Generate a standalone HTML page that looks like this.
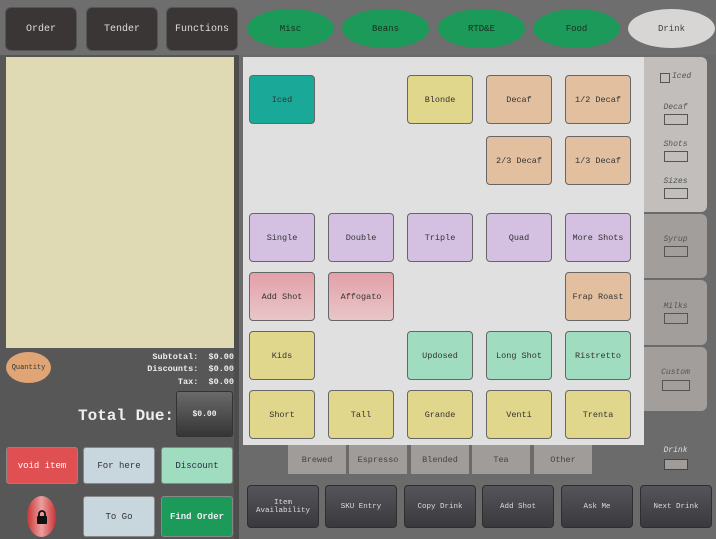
<!DOCTYPE html>
<html><head><meta charset="utf-8"><style>
*{box-sizing:border-box;margin:0;padding:0}
body{width:716px;height:539px;overflow:hidden;background:#6b6b6b;font-family:"Liberation Mono","DejaVu Sans Mono",monospace;position:relative}
div{position:absolute}
.c{display:flex;align-items:center;justify-content:center;text-align:center}
.tb{background:#3a3636;border:1px solid #555;border-radius:6px;color:#ddd;font-size:10px;top:7px;height:44px;width:72px}
.el{border-radius:50%;background:#1c9a5a;font-size:9px;top:9px;height:39px;width:87px;color:#17301f}
.b{width:66px;height:49px;border:1px solid #666;border-radius:4px;font-size:8.5px;color:#333}
.y{background:#e0d68c}.o{background:#e2c09f}.p{background:#d4c0e0}.g{background:#a0dcbf}
.pk{background:linear-gradient(#e3a0a8,#e8c6c9)}
.tab{top:445px;height:29px;width:58px;background:#a09c99;color:#444;font-size:8.5px}
.bb{top:485px;height:43px;width:72px;background:linear-gradient(#55545a,#3a393d);border:1px solid #2e2e2e;border-radius:4px;color:#ddd;font-size:7.5px}
.sl{color:#555;font-size:8px;font-style:italic;left:644px;width:63px;text-align:center}
.bx{width:24px;height:11px;border:1px solid #555;left:664px}
.lb{height:37px;width:72px;border-radius:3px;font-size:9px;border:1px solid #888}
</style></head><body>
<div style="left:0;top:0;width:716px;height:55px;background:#6e6e6e"></div>
<div style="left:0;top:55px;width:238px;height:484px;background:#575757"></div>
<div style="left:234px;top:55px;width:5px;height:484px;background:#4d4d4d"></div>
<div class="tb c" style="left:5px">Order</div>
<div class="tb c" style="left:86px">Tender</div>
<div class="tb c" style="left:166px">Functions</div>
<div class="el c" style="left:247px">Misc</div>
<div class="el c" style="left:342px">Beans</div>
<div class="el c" style="left:438px">RTD&amp;E</div>
<div class="el c" style="left:533px">Food</div>
<div class="el c" style="left:628px;background:#d8d6d4;color:#444">Drink</div>

<div style="left:6px;top:57px;width:228px;height:291px;background:#dfdab4"></div>
<div class="c" style="left:6px;top:352px;width:45px;height:31px;border-radius:50%;background:#dfa574;font-size:7px;color:#333">Quantity</div>
<div style="left:120px;top:351px;width:114px;text-align:right;color:#eee;font-size:8.5px;line-height:12.3px;font-weight:bold">Subtotal: &nbsp;$0.00<br>Discounts: &nbsp;$0.00<br>Tax: &nbsp;$0.00</div>
<div style="left:78px;top:407px;color:#eee;font-size:16px;font-weight:bold">Total Due:</div>
<div class="c" style="left:176px;top:391px;width:57px;height:46px;border-radius:3px;background:linear-gradient(#6a6a6a,#353535);border:1px solid #333;color:#eee;font-size:8px;font-weight:bold">$0.00</div>
<div class="lb c" style="left:6px;top:447px;background:#e05053;color:#fff">void item</div>
<div class="lb c" style="left:83px;top:447px;background:#c8d6de;color:#333">For here</div>
<div class="lb c" style="left:161px;top:447px;background:#a0dcbf;color:#234">Discount</div>
<div class="c" style="left:27px;top:496px;width:29px;height:41px;border-radius:50%;background:linear-gradient(90deg,#c33,#e9a0a0 50%,#c33)"><svg width="12" height="14" viewBox="0 0 12 14"><path d="M3 6V4a3 3 0 016 0v2" fill="none" stroke="#111" stroke-width="1.8"/><rect x="1" y="6" width="10" height="8" rx="1" fill="#111"/></svg></div>
<div class="lb c" style="left:83px;top:496px;height:41px;background:#c8d6de;color:#333">To Go</div>
<div class="lb c" style="left:161px;top:496px;height:41px;background:#1c9a5a;color:#eee;font-weight:bold">Find Order</div>

<div style="left:243px;top:57px;width:401px;height:388px;background:#e0e0e0"></div>
<div style="left:644px;top:57px;width:63px;height:155px;background:#c1bebb;border-radius:0 6px 6px 0"></div>
<div style="left:644px;top:214px;width:63px;height:64px;background:#a29e9b;border-radius:0 6px 6px 0"></div>
<div style="left:644px;top:280px;width:63px;height:65px;background:#a29e9b;border-radius:0 6px 6px 0"></div>
<div style="left:644px;top:347px;width:63px;height:64px;background:#a29e9b;border-radius:0 6px 6px 0"></div>
<div style="left:660px;top:73px;width:10px;height:10px;border:1px solid #555"></div>
<div style="left:672px;top:72px;font-size:8px;color:#555;font-style:italic">Iced</div>
<div class="sl" style="top:103px">Decaf</div><div class="bx" style="top:114px"></div>
<div class="sl" style="top:140px">Shots</div><div class="bx" style="top:151px"></div>
<div class="sl" style="top:177px">Sizes</div><div class="bx" style="top:188px"></div>
<div class="sl" style="top:235px">Syrup</div><div class="bx" style="top:246px"></div>
<div class="sl" style="top:302px">Milks</div><div class="bx" style="top:313px"></div>
<div class="sl" style="top:368px">Custom</div><div class="bx" style="left:662px;width:28px;top:380px"></div>
<div class="sl" style="top:446px;color:#ddd">Drink</div><div class="bx" style="top:459px;background:#a09c99;border-color:#444"></div>

<div class="b c" style="left:249px;top:75px;background:#1aa898">Iced</div>
<div class="b c y" style="left:407px;top:75px">Blonde</div>
<div class="b c o" style="left:486px;top:75px">Decaf</div>
<div class="b c o" style="left:565px;top:75px">1/2 Decaf</div>
<div class="b c o" style="left:486px;top:136px">2/3 Decaf</div>
<div class="b c o" style="left:565px;top:136px">1/3 Decaf</div>
<div class="b c p" style="left:249px;top:213px">Single</div>
<div class="b c p" style="left:328px;top:213px">Double</div>
<div class="b c p" style="left:407px;top:213px">Triple</div>
<div class="b c p" style="left:486px;top:213px">Quad</div>
<div class="b c p" style="left:565px;top:213px">More Shots</div>
<div class="b c pk" style="left:249px;top:272px">Add Shot</div>
<div class="b c pk" style="left:328px;top:272px">Affogato</div>
<div class="b c o" style="left:565px;top:272px">Frap Roast</div>
<div class="b c y" style="left:249px;top:331px">Kids</div>
<div class="b c g" style="left:407px;top:331px">Updosed</div>
<div class="b c g" style="left:486px;top:331px">Long Shot</div>
<div class="b c g" style="left:565px;top:331px">Ristretto</div>
<div class="b c y" style="left:249px;top:390px">Short</div>
<div class="b c y" style="left:328px;top:390px">Tall</div>
<div class="b c y" style="left:407px;top:390px">Grande</div>
<div class="b c y" style="left:486px;top:390px">Venti</div>
<div class="b c y" style="left:565px;top:390px">Trenta</div>

<div class="tab c" style="left:288px">Brewed</div>
<div class="tab c" style="left:349px">Espresso</div>
<div class="tab c" style="left:411px">Blended</div>
<div class="tab c" style="left:472px">Tea</div>
<div class="tab c" style="left:534px">Other</div>

<div class="bb c" style="left:247px">Item<br>Availability</div>
<div class="bb c" style="left:325px">SKU Entry</div>
<div class="bb c" style="left:404px">Copy Drink</div>
<div class="bb c" style="left:482px">Add Shot</div>
<div class="bb c" style="left:561px">Ask Me</div>
<div class="bb c" style="left:640px">Next Drink</div>
</body></html>
